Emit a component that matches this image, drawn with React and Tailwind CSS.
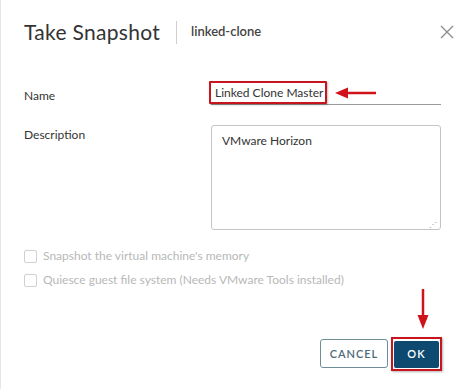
import React from 'react';

// Red annotation arrow, pointing left or down
const Arrow = ({ dir }) => {
  if (dir === 'left') {
    return (
      <svg width="42" height="14" viewBox="0 0 42 14">
        <line x1="10" y1="7" x2="41" y2="7" stroke="#d0121b" strokeWidth="2.5" />
        <polygon points="0,7 13,1.5 13,12.5" fill="#d0121b" />
      </svg>
    );
  }
  return (
    <svg width="14" height="40" viewBox="0 0 14 40">
      <line x1="7" y1="0" x2="7" y2="30" stroke="#d0121b" strokeWidth="2.5" />
      <polygon points="7,40 1.5,26 12.5,26" fill="#d0121b" />
    </svg>
  );
};

const Checkbox = ({ label }) => (
  <label className="flex items-center gap-[6px] text-[12px] leading-[18px] text-[#b8b8b8]">
    <span className="w-[13px] h-[13px] border border-[#d0d0d0] rounded-[2px] bg-white" />
    {label}
  </label>
);

export default function App() {
  return (
    <div
      className="relative w-[474px] h-[389px] bg-white border-l border-[#e6e6e6] overflow-hidden"
      style={{ fontFamily: 'Lato, "Open Sans", sans-serif' }}
    >
      {/* header */}
      <div className="flex items-center pl-[23px] pr-[20px] pt-[18px]">
        <h1 className="text-[21px] text-[#333] tracking-[0.3px] leading-[28px]">
          Take Snapshot
        </h1>
        <div className="w-px h-[23px] bg-[#cfcfcf] ml-[16px] mr-[14px]" />
        <span className="text-[13px] font-semibold text-[#444]">linked-clone</span>
        <button className="ml-auto text-[#8a8a8a]">
          <svg width="14" height="14" viewBox="0 0 14 14">
            <path d="M1 1 L13 13 M13 1 L1 13" stroke="#8a8a8a" strokeWidth="1.3" fill="none" />
          </svg>
        </button>
      </div>

      {/* form */}
      <div className="grid grid-cols-[187px_230px] pl-[23px] mt-[37px] gap-y-[20px] text-[12px] leading-[18px] text-[#333]">
        <div className="pt-[4px]">Name</div>
        <div className="relative border-b border-[#9a9a9a] h-[22px]">
          <div className="absolute -left-[2px] -top-[2px] w-[118px] h-[23px] border-2 border-[#c8141c] rounded-[1px] flex items-center pl-[4px] whitespace-nowrap shadow-[1px_1px_2px_rgba(0,0,0,0.25)]">
            Linked Clone Master
          </div>
          <div className="absolute left-[124px] top-[3px]">
            <Arrow dir="left" />
          </div>
        </div>

        <div className="pt-[1px]">Description</div>
        <div className="relative h-[105px] border border-[#c4c4c4] rounded-[3px] px-[10px] pt-[6px]">
          VMware Horizon
          <span className="absolute right-[3px] bottom-[1px] text-[8px] text-[#999] leading-none">⋰</span>
        </div>
      </div>

      {/* checkboxes */}
      <div className="flex flex-col gap-[6px] pl-[23px] mt-[17px]">
        <Checkbox label="Snapshot the virtual machine's memory" />
        <Checkbox label="Quiesce guest file system (Needs VMware Tools installed)" />
      </div>

      {/* footer */}
      <div className="absolute left-[415px] top-[289px]">
        <Arrow dir="down" />
      </div>
      <div className="flex justify-end items-center gap-[3px] pr-[32px] mt-[48px]">
        <button className="w-[68px] h-[29px] border border-[#6f8c99] rounded-[3px] text-[11px] font-semibold tracking-[1px] text-[#4d6b7a] bg-white">
          CANCEL
        </button>
        <div className="border-2 border-[#c8141c] p-px shadow-[1px_1px_2px_rgba(0,0,0,0.3)]">
          <button className="w-[45px] h-[27px] bg-[#0e4a6f] rounded-[2px] text-[11px] font-semibold tracking-[1px] text-white">
            OK
          </button>
        </div>
      </div>
    </div>
  );
}
